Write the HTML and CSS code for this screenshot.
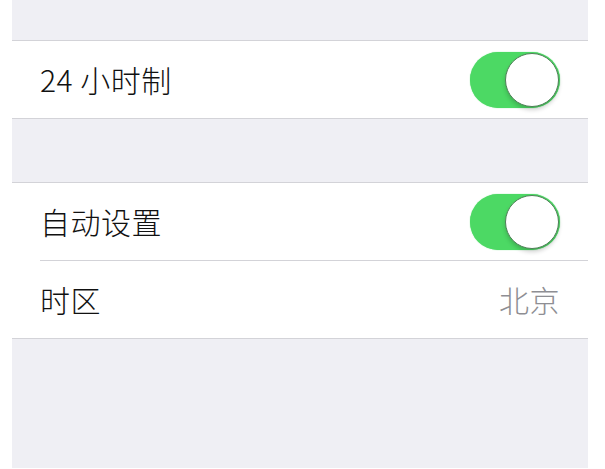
FILE: index.html
```html
<!DOCTYPE html>
<html lang="zh-CN">
<head>
<meta charset="utf-8">
<link rel="stylesheet" href="styles.css">
</head>
<body>
<div class="screen">
  <div class="gap-top"></div>
  <div class="group">
    <div class="row">
      <span class="label">24 小时制</span>
      <span class="switch on"><span class="knob"></span></span>
    </div>
  </div>
  <div class="gap-mid"></div>
  <div class="group">
    <div class="row">
      <span class="label">自动设置</span>
      <span class="switch on"><span class="knob"></span></span>
    </div>
    <div class="sep"></div>
    <div class="row">
      <span class="label">时区</span>
      <span class="value">北京</span>
    </div>
  </div>
</div>
</body>
</html>
```
FILE: styles.css
```css
html, body {
  margin: 0;
  padding: 0;
  background: #ffffff;
}
body {
  width: 605px;
  height: 469px;
  overflow: hidden;
  font-family: "Noto Sans CJK SC", "Noto Sans", sans-serif;
}
.screen {
  margin-left: 12px;
  width: 576px;
  height: 468px;
  background: #efeff4;
  display: flex;
  flex-direction: column;
}
.gap-top {
  height: 40px;
  flex: none;
}
.gap-mid {
  height: 63px;
  flex: none;
}
.group {
  background: #ffffff;
  border-top: 1px solid #d3d3d8;
  border-bottom: 1px solid #d3d3d8;
  flex: none;
}
.row {
  height: 77px;
  display: flex;
  align-items: center;
  justify-content: space-between;
  padding: 0 28px;
}
.sep {
  height: 1px;
  margin-left: 28px;
  background: #d3d3d8;
}
.label {
  font-size: 30px;
  font-weight: 300;
  color: #111111;
  letter-spacing: 0.5px;
  margin-top: -2px;
}
.value {
  font-size: 30px;
  font-weight: 300;
  color: #8e8e93;
  letter-spacing: 0.5px;
  margin-top: -2px;
}
.switch {
  position: relative;
  width: 90px;
  height: 56px;
  border-radius: 28px;
  background: #4cd964;
  box-shadow: 0 0 1px #4cd964;
}
.knob {
  position: absolute;
  right: 1px;
  top: 1px;
  width: 54px;
  height: 54px;
  border-radius: 50%;
  background: #ffffff;
  box-sizing: border-box;
  border: 1.5px solid #4f7f57;
  box-shadow: 0 3px 4px rgba(0, 0, 0, 0.18);
}
```
